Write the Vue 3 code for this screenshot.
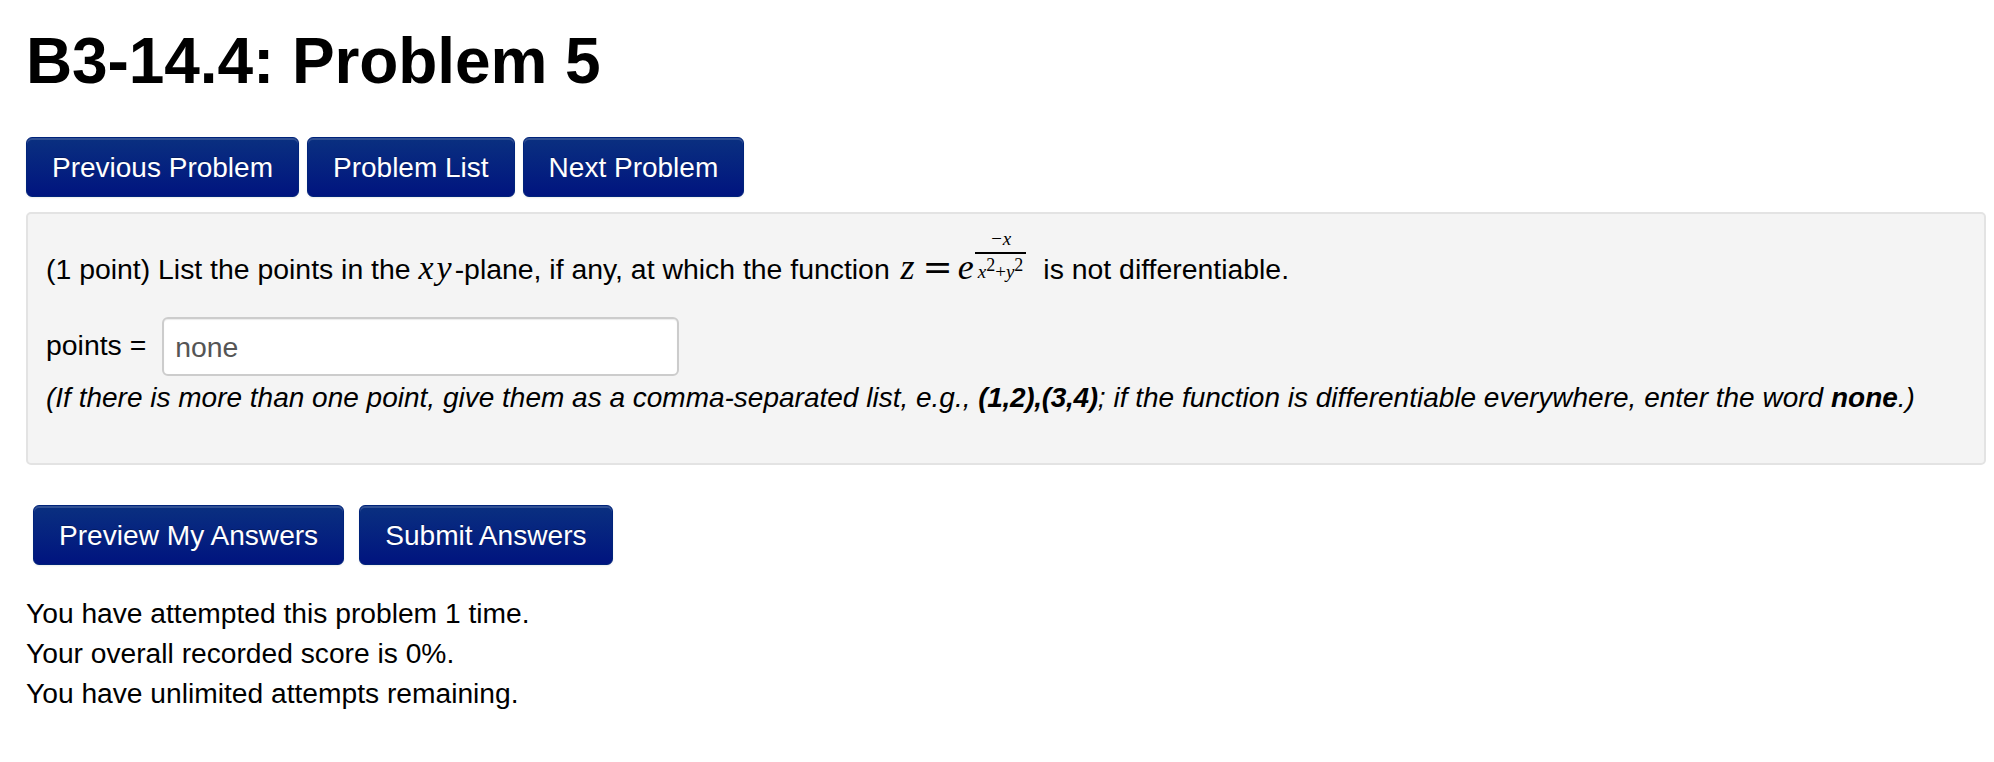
<template>
  <div class="page">
    <h1 class="title">B3-14.4: Problem 5</h1>

    <div class="nav-row">
      <a v-for="item in navItems" :key="item" class="btn">{{ item }}</a>
    </div>

    <div class="problem">
      <p class="statement">
        (1 point) List the points in the <span class="math mi-xy">xy</span>-plane, if any, at which the function
        <span class="math mi-z">z</span><span class="math-eq">=</span><span class="math mi-e">e</span><span class="frac"><span class="frac-num">−x</span><span class="frac-den">x<sup>2</sup><span class="plus">+</span>y<sup>2</sup></span></span><span class="after-math">is not differentiable.</span>
      </p>
      <div class="answer-row">
        <label class="answer-label" for="points">points =</label>
        <input id="points" v-model="answer" class="answer-input" type="text" />
      </div>
      <p class="hint">
        (If there is more than one point, give them as a comma-separated list, e.g., <b class="example">(1,2),(3,4)</b>; if the function is differentiable everywhere, enter the word <b>none</b>.)
      </p>
    </div>

    <div class="submit-row">
      <button class="btn" type="button">Preview My Answers</button>
      <button class="btn" type="button">Submit Answers</button>
    </div>

    <div class="status">
      <div v-for="line in statusLines" :key="line">{{ line }}</div>
    </div>
  </div>
</template>

<script setup>
import { ref } from 'vue';

const answer = ref('none');
const navItems = ['Previous Problem', 'Problem List', 'Next Problem'];
const statusLines = [
  'You have attempted this problem 1 time.',
  'Your overall recorded score is 0%.',
  'You have unlimited attempts remaining.'
];
</script>

<style>
html, body {
  margin: 0;
  background: #fff;
}
</style>

<style scoped>
.page {
  padding: 26px 8px 0 26px;
  font-family: "Liberation Sans", Arial, sans-serif;
  font-size: 28px;
  line-height: 40px;
  color: #000;
}

.title {
  margin: 0 0 41px;
  font-size: 64px;
  line-height: 70px;
  font-weight: 700;
  letter-spacing: -0.1px;
}

.nav-row {
  display: flex;
  gap: 8px;
}

.btn {
  box-sizing: border-box;
  display: block;
  height: 60px;
  padding: 0 25px;
  border: 1px solid #00237a;
  border-radius: 6px;
  background: linear-gradient(to bottom, #0a3080, #00147f);
  box-shadow: inset 0 2px 0 rgba(255, 255, 255, 0.16), 0 1px 2px rgba(0, 0, 0, 0.08);
  color: #fff;
  font-family: inherit;
  font-size: 28px;
  line-height: 60px;
  text-shadow: 0 -1px 0 rgba(0, 0, 0, 0.25);
}

.problem {
  box-sizing: border-box;
  margin-top: 15px;
  padding: 15px 18px 45px;
  border: 2px solid #e3e3e3;
  border-radius: 5px;
  background: #f4f4f4;
}

.statement {
  margin: 0;
  font-size: 28.4px;
}

.math,
.frac {
  font-family: "Liberation Serif", "Times New Roman", serif;
}

.math {
  font-style: italic;
  font-size: 36px;
}

.mi-xy {
  font-size: 34px;
  letter-spacing: 3px;
}

.mi-z {
  margin-left: 3px;
}

.math-eq {
  font-family: "DejaVu Serif", serif;
  font-size: 36px;
  margin: 0 5px 0 8px;
}

.frac {
  display: inline-flex;
  flex-direction: column;
  align-items: center;
  vertical-align: 34px;
  margin-left: 1px;
  font-size: 19px;
  line-height: 20px;
  font-style: italic;
}

.frac-num {
  padding-bottom: 3px;
}

.frac-den {
  border-top: 2px solid #000;
  padding: 8px 3px 0;
}

.frac-den sup {
  font-size: 18px;
  font-style: normal;
  line-height: 0;
  vertical-align: 7px;
}

.plus {
  font-style: normal;
}

.after-math {
  margin-left: 17px;
}

.answer-row {
  display: flex;
  align-items: flex-start;
  margin: 28px 0 2px;
}

.answer-label {
  margin: 8px 16px 0 0;
  font-size: 28.4px;
}

.answer-input {
  box-sizing: border-box;
  width: 517px;
  height: 59px;
  padding: 2px 11px 0;
  border: 2px solid #ccc;
  border-radius: 6px;
  background: #fff;
  box-shadow: inset 0 1px 1px rgba(0, 0, 0, 0.08);
  color: #555;
  font-family: inherit;
  font-size: 28.4px;
  outline: none;
}

.hint {
  margin: 0;
  font-style: italic;
}

.example {
  letter-spacing: -0.3px;
}

.submit-row {
  display: flex;
  gap: 15px;
  margin: 40px 0 0 7px;
}

.submit-row .btn {
  font-size: 28.1px;
}

.status {
  margin-top: 28px;
  font-size: 28.2px;
}
</style>
